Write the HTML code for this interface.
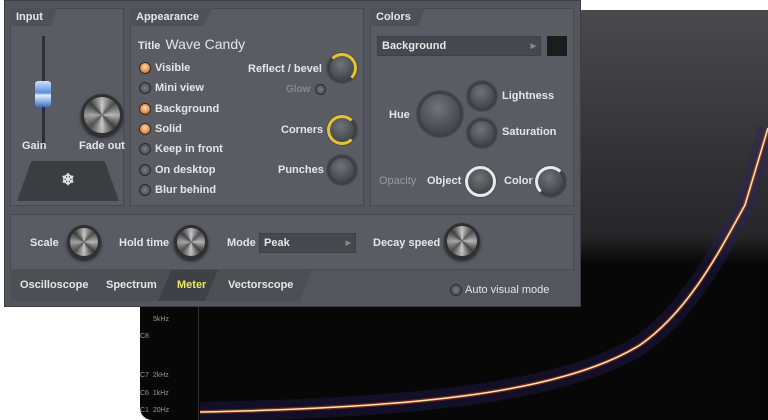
<!DOCTYPE html>
<html><head><meta charset="utf-8"><style>
*{margin:0;padding:0;box-sizing:border-box}
body{width:768px;height:420px;background:#fff;position:relative;overflow:hidden;font-family:"Liberation Sans",sans-serif;font-weight:bold;font-size:11px;color:#e4e6e8}
.viz{position:absolute;left:140px;top:10px;width:640px;height:410px;border-radius:0 0 0 12px;background:linear-gradient(#4a4a4c 0%,#262628 55%,#070707 62%,#070707 100%)}
.panel{position:absolute;left:4px;top:0;width:577px;height:307px;background:#53565c;border:1px solid #3c3e42}
.sec{position:absolute;background:#595c62;border:1px solid #45484d}
.tab{position:absolute;top:-1px;left:-1px;height:18px;padding:3px 14px 0 6px;background:#4e5156;font-size:11px;clip-path:polygon(0 0,100% 0,88% 100%,0 100%)}
.t{position:absolute;white-space:nowrap}
.rad{position:absolute;width:12px;height:12px;border-radius:50%;background:radial-gradient(#7a7d82,#3d3f43);border:1px solid #2a2c2f}
.rad.on{background:radial-gradient(circle at 50% 40%,#ffe0b0,#e07a30 70%,#7a3a10)}
.knob{position:absolute;border-radius:50%;background:radial-gradient(circle at 45% 35%,#70737a,#45484d 70%);border:3px solid #3e4045;box-shadow:0 0 0 1px #4a4d52}
.mk{position:absolute;border-radius:50%;background:radial-gradient(circle at 50% 50%,transparent 40%,rgba(0,0,0,.25)),conic-gradient(#ccc,#555,#bbb,#444,#ccc,#555,#aaa,#444,#ccc);border:3px solid #2e3034;box-shadow:0 2px 3px #222}
.dd{position:absolute;background:#45484d;border:1px solid #3d4044;font-size:11px;padding:3px 4px}
.ax{position:absolute;font-size:7px;color:#999;font-weight:normal;white-space:nowrap}
</style></head><body>
<div class="viz">
<div style="position:absolute;left:58px;top:280px;width:1px;height:130px;background:#333"></div>
<div class="ax" style="left:13px;top:306px">5kHz</div>
<div class="ax" style="left:0;top:323px">C8</div>
<div class="ax" style="left:0;top:362px">C7 &nbsp;2kHz</div>
<div class="ax" style="left:0;top:380px">C6 &nbsp;1kHz</div>
<div class="ax" style="left:0;top:397px">C1 &nbsp;20Hz</div>
</div>
<svg style="position:absolute;left:0;top:0" width="768" height="420">
<path d="M200,412 C400,408 560,395 640,345 C690,310 720,250 745,205 L768,128" fill="none" stroke="#2a1f60" stroke-width="20" opacity=".35"/>
<path d="M200,412 C400,408 560,395 640,345 C690,310 720,250 745,205 L768,128" fill="none" stroke="#b03a2a" stroke-width="4" opacity=".6"/>
<path d="M200,412 C400,408 560,395 640,345 C690,310 720,250 745,205 L768,128" fill="none" stroke="#ffe8a0" stroke-width="1.5"/>
</svg>
<div class="panel">
 <div class="sec" style="left:5px;top:7px;width:114px;height:198px"><div class="tab">Input</div>
  <div style="position:absolute;left:31px;top:27px;width:3px;height:110px;background:#2e3034"></div>
  <div style="position:absolute;left:24px;top:72px;width:16px;height:26px;border-radius:3px;background:linear-gradient(#cfe4ff,#5b8fd8 45%,#e0eeff 55%,#3d6fbf)"></div>
  <div class="mk" style="left:70px;top:85px;width:42px;height:42px"></div>
  <div class="t" style="left:11px;top:131px;font-size:11px">Gain</div>
  <div class="t" style="left:68px;top:131px;font-size:11px">Fade out</div>
  <div style="position:absolute;left:6px;top:152px;width:102px;height:40px;background:#3b3d41;clip-path:polygon(14% 0,86% 0,100% 100%,0 100%);text-align:center;font-size:16px;line-height:40px">❄</div>
 </div>
 <div class="sec" style="left:125px;top:7px;width:234px;height:198px"><div class="tab">Appearance</div>
  <div class="t" style="left:7px;top:27px;font-size:11px">Title <span style="font-weight:normal;font-size:14px;margin-left:2px">Wave Candy</span></div>
  <div class="rad on" style="left:8px;top:53px"></div><div class="t" style="left:24px;top:53px">Visible</div>
  <div class="rad" style="left:8px;top:73px"></div><div class="t" style="left:24px;top:73px">Mini view</div>
  <div class="rad on" style="left:8px;top:94px"></div><div class="t" style="left:24px;top:94px">Background</div>
  <div class="rad on" style="left:8px;top:114px"></div><div class="t" style="left:24px;top:114px">Solid</div>
  <div class="rad" style="left:8px;top:134px"></div><div class="t" style="left:24px;top:134px">Keep in front</div>
  <div class="rad" style="left:8px;top:155px"></div><div class="t" style="left:24px;top:155px">On desktop</div>
  <div class="rad" style="left:8px;top:175px"></div><div class="t" style="left:24px;top:175px">Blur behind</div>
  <div class="t" style="left:117px;top:54px;font-size:11px">Reflect / bevel</div>
  <div class="knob" style="left:196px;top:44px;width:30px;height:30px;border-top-color:#e8c030;border-right-color:#e8c030"></div>
  <div class="t" style="left:155px;top:75px;color:#888;font-size:10px">Glow</div><div class="rad" style="left:184px;top:75px;width:11px;height:11px"></div>
  <div class="t" style="left:150px;top:115px;font-size:11px">Corners</div>
  <div class="knob" style="left:196px;top:106px;width:30px;height:30px;border-left-color:#e8c030;border-top-color:#e8c030;border-bottom-color:#e8c030"></div>
  <div class="t" style="left:147px;top:155px;font-size:11px">Punches</div>
  <div class="knob" style="left:196px;top:146px;width:30px;height:30px"></div>
 </div>
 <div class="sec" style="left:365px;top:7px;width:204px;height:198px"><div class="tab">Colors</div>
  <div class="dd" style="left:6px;top:27px;width:164px;height:20px;font-size:11px">Background<span style="position:absolute;right:4px;color:#888;font-size:7px;top:5px">▶</span></div>
  <div style="position:absolute;left:176px;top:27px;width:20px;height:20px;background:#1c1c1c"></div>
  <div class="t" style="left:18px;top:100px;font-size:11px">Hue</div>
  <div class="knob" style="left:46px;top:82px;width:46px;height:46px"></div>
  <div class="knob" style="left:96px;top:72px;width:30px;height:30px"></div>
  <div class="t" style="left:131px;top:81px;font-size:11px">Lightness</div>
  <div class="knob" style="left:96px;top:109px;width:30px;height:30px"></div>
  <div class="t" style="left:131px;top:117px;font-size:11px">Saturation</div>
  <div class="t" style="left:8px;top:166px;color:#999;font-weight:normal;font-size:11px">Opacity</div>
  <div class="t" style="left:56px;top:166px;font-size:11px">Object</div>
  <div class="knob" style="left:94px;top:157px;width:31px;height:31px;border-color:#e8e8e8"></div>
  <div class="t" style="left:133px;top:166px;font-size:11px">Color</div>
  <div class="knob" style="left:164px;top:157px;width:31px;height:31px;border-left-color:#e8e8e8;border-top-color:#e8e8e8"></div>
 </div>
 <div class="sec" style="left:5px;top:213px;width:564px;height:56px">
  <div class="t" style="left:19px;top:22px;font-size:11px">Scale</div>
  <div class="mk" style="left:56px;top:10px;width:34px;height:34px"></div>
  <div class="t" style="left:108px;top:22px;font-size:11px">Hold time</div>
  <div class="mk" style="left:163px;top:10px;width:34px;height:34px"></div>
  <div class="t" style="left:216px;top:22px;font-size:11px">Mode</div>
  <div class="dd" style="left:248px;top:18px;width:97px;height:20px;font-size:11px">Peak<span style="position:absolute;right:4px;color:#888;font-size:7px;top:5px">▶</span></div>
  <div class="t" style="left:362px;top:22px;font-size:11px">Decay speed</div>
  <div class="mk" style="left:433px;top:8px;width:36px;height:36px"></div>
 </div>
 <div style="position:absolute;left:5px;top:268px;width:302px;height:32px;background:#4c4f54;clip-path:polygon(0 0,100% 0,96% 100%,0 100%)"></div>
 <div style="position:absolute;left:153px;top:269px;width:60px;height:31px;background:#3e4145;clip-path:polygon(22% 0,100% 0,78% 100%,0 100%)"></div>
 <div class="t" style="left:15px;top:278px;font-size:11px">Oscilloscope</div>
 <div class="t" style="left:101px;top:278px;font-size:11px">Spectrum</div>
 <div class="t" style="left:172px;top:278px;font-size:11px;color:#eaea60">Meter</div>
 <div class="t" style="left:223px;top:278px;font-size:11px">Vectorscope</div>
 <div class="rad" style="left:445px;top:283px"></div>
 <div class="t" style="left:460px;top:283px;font-size:11px;font-weight:normal">Auto visual mode</div>
</div>
</body></html>
